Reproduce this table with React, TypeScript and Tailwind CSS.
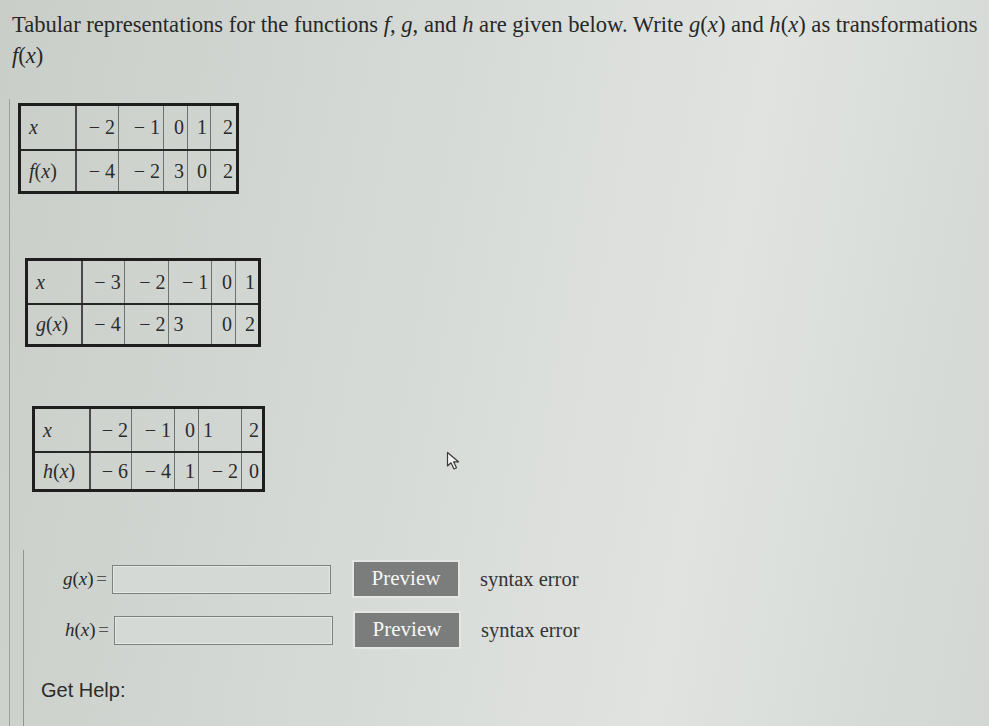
import { FC } from "react";

type Cell = { t: string; a?: "l" | "r"; w: number };

const serif = { fontFamily: '"Liberation Serif", "Times New Roman", serif' };

const MathVar: FC<{ s: string }> = ({ s }) => (
  <span className="italic" style={{ fontFamily: '"Liberation Serif", serif' }}>
    {s}
  </span>
);

const Fn: FC<{ f: string }> = ({ f }) => (
  <span className="whitespace-nowrap">
    <MathVar s={f} />
    <span>(</span>
    <MathVar s="x" />
    <span>)</span>
  </span>
);

const ValueTable: FC<{ name: string; top: Cell[]; bottom: Cell[]; rowH: [number, number]; className: string }> = ({
  name,
  top,
  bottom,
  rowH,
  className,
}) => {
  const row = (label: React.ReactNode, cells: Cell[], h: number, first: boolean) => (
    <tr style={{ height: h }}>
      <td className={`w-[56px] pl-[8px] text-left border-r-[2px] border-r-[#4a4a4a] ${first ? "border-b-[2px] border-b-[#262626]" : ""}`}>
        {label}
      </td>
      {cells.map((c, i) => (
        <td
          key={i}
          style={{ width: c.w }}
          className={`whitespace-nowrap ${c.a === "l" ? "text-left pl-[4px]" : "text-right pr-[3px]"} ${
            i < cells.length - 1 ? "border-r border-r-[#6f7370]" : ""
          } ${first ? "border-b-[2px] border-b-[#262626]" : ""}`}
        >
          {c.t}
        </td>
      ))}
    </tr>
  );
  return (
    <table className={`border-collapse border-[3px] border-[#1e1e1e] text-[20px] text-[#2b2b2b] ${className}`}>
      <tbody>
        {row(<MathVar s="x" />, top, rowH[0], true)}
        {row(<Fn f={name} />, bottom, rowH[1], false)}
      </tbody>
    </table>
  );
};

const Cursor: FC = () => (
  <svg className="absolute left-[446px] top-[451px]" width="16" height="20" viewBox="0 0 16 20">
    <path d="M1.5 1.5 L1.5 15 L5 11.8 L8 18 L10.5 16.8 L7.6 10.8 L12.5 10.8 Z" fill="#f2f2f2" stroke="#3a3a3a" strokeWidth="1.2" strokeLinejoin="round" />
  </svg>
);

const AnswerRow: FC<{ f: string; indent: string; inputW: string; btnIndent: string }> = ({ f, indent, inputW, btnIndent }) => (
  <div className={`flex items-center ${indent}`}>
    <span className="w-[44px] flex justify-between text-[19px] text-[#2b2b2b] whitespace-nowrap">
      <Fn f={f} />
      <span className="text-[#555]">=</span>
    </span>
    <div className={`ml-[5px] ${inputW} h-[29px] border border-[#7d827f] shadow-[inset_0_0_0_1px_#e4e7e4] bg-[#d5d9d5]`} />
    <button
      className={`${btnIndent} w-[108px] h-[38px] bg-[#7a7d7b] border-[2px] border-[#e3e6e3] text-[#f7f7f7] text-[21px]`}
      style={serif}
    >
      Preview
    </button>
    <span className="ml-[20px] text-[20.5px] text-[#333]">syntax error</span>
  </div>
);

const App: FC = () => {
  return (
    <div
      className="relative w-[989px] h-[726px] overflow-hidden bg-[linear-gradient(100deg,#c9cec9_0%,#d6dad6_40%,#e0e3e0_70%,#d2d7d3_100%)] text-[#272727]"
      style={serif}
    >
      <p className="pl-[12px] pt-[9px] text-[22.6px] leading-[31px] whitespace-nowrap">
        Tabular representations for the functions <MathVar s="f" />, <MathVar s="g" />, and <MathVar s="h" /> are given below.
        Write <Fn f="g" /> and <Fn f="h" /> as transformations
        <br />
        <Fn f="f" />
      </p>

      <div className="ml-[9px] mt-[28px] h-[700px] border-l border-[#9da29f] pt-[4px]">
        <ValueTable
          name="f"
          className="ml-[8px] w-[221px]"
          rowH={[45, 43]}
          top={[
            { t: "− 2", w: 43 },
            { t: "− 1", w: 45 },
            { t: "0", w: 24 },
            { t: "1", w: 23 },
            { t: "2", w: 27 },
          ]}
          bottom={[
            { t: "− 4", w: 43 },
            { t: "− 2", w: 45 },
            { t: "3", w: 24 },
            { t: "0", w: 23 },
            { t: "2", w: 27 },
          ]}
        />

        <ValueTable
          name="g"
          className="ml-[15px] mt-[64px] w-[236px]"
          rowH={[44, 42]}
          top={[
            { t: "− 3", w: 42 },
            { t: "− 2", w: 45 },
            { t: "− 1", w: 43 },
            { t: "0", w: 24 },
            { t: "1", w: 24 },
          ]}
          bottom={[
            { t: "− 4", w: 42 },
            { t: "− 2", w: 45 },
            { t: "3", a: "l", w: 43 },
            { t: "0", w: 24 },
            { t: "2", w: 24 },
          ]}
        />

        <ValueTable
          name="h"
          className="ml-[22px] mt-[59px] w-[233px]"
          rowH={[44, 39]}
          top={[
            { t: "− 2", w: 42 },
            { t: "− 1", w: 43 },
            { t: "0", w: 24 },
            { t: "1", a: "l", w: 43 },
            { t: "2", w: 22 },
          ]}
          bottom={[
            { t: "− 6", w: 42 },
            { t: "− 4", w: 43 },
            { t: "1", w: 24 },
            { t: "− 2", w: 43 },
            { t: "0", w: 22 },
          ]}
        />

        <div className="ml-[13px] mt-[58px] h-[300px] border-l border-[#8f9491] pt-[10px] flex flex-col">
          <AnswerRow f="g" indent="pl-[39px]" inputW="w-[219px]" btnIndent="ml-[21px]" />
          <div className="h-[13px]" />
          <AnswerRow f="h" indent="pl-[41px]" inputW="w-[219px]" btnIndent="ml-[20px]" />
          <p className="pl-[17px] mt-[26px] text-[#2b2b2b]" style={{ fontFamily: '"Liberation Sans", Arial, sans-serif', fontSize: 20 }}>
            Get Help:
          </p>
        </div>
      </div>

      <Cursor />
    </div>
  );
};

export default App;
